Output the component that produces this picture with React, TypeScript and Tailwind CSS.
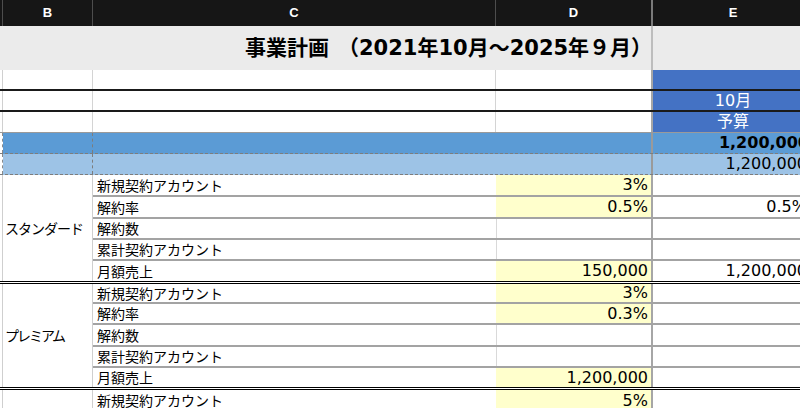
import React from "react";

type Row = {
  c: string;
  d?: string;
  y?: boolean;
  e?: string;
  h: string;
  last?: boolean;
};

const jp = "font-['Noto_Sans_CJK_JP',sans-serif]";
const num = "font-['DejaVu_Sans','Noto_Sans_CJK_JP',sans-serif]";

function DataRow({ r }: { r: Row }) {
  const line = r.last ? "" : "border-b-2 border-[#a3a3a3]";
  return (
    <div className={`flex ${r.h} ${line}`}>
      <div className={`w-[403px] flex items-center pl-1 text-[14px] text-black ${jp}`}>{r.c}</div>
      <div
        className={`w-[157px] flex items-center justify-end pr-[3px] border-r-2 border-r-[#a6a6a6] text-[16px] text-black ${num} ${
          r.y ? "bg-[#ffffcc]" : "border-l border-l-[#d9d9d9]"
        }`}
      >
        {r.d}
      </div>
      <div className={`w-[160px] flex items-center justify-end pr-[6px] text-[16px] text-black ${num}`}>{r.e}</div>
    </div>
  );
}

function Block({ label, rows, track, double }: { label: string; rows: Row[]; track: string; double: boolean }) {
  return (
    <div className={`flex ${double ? "border-b-[3px] border-double border-black" : ""}`}>
      <div className="w-[3px] border-r border-[#cfcfcf]" />
      <div className={`w-[90px] flex items-center pl-[2px] border-r border-[#cfcfcf] text-[14px] text-black ${jp} ${track}`}>
        {label}
      </div>
      <div className="flex flex-col">
        {rows.map((r, i) => (
          <DataRow key={i} r={r} />
        ))}
      </div>
    </div>
  );
}

export default function App() {
  const std: Row[] = [
    { c: "新規契約アカウント", d: "3%", y: true, h: "h-[22px]" },
    { c: "解約率", d: "0.5%", y: true, e: "0.5%", h: "h-[22px]" },
    { c: "解約数", h: "h-[21px]" },
    { c: "累計契約アカウント", h: "h-[21px]" },
    { c: "月額売上", d: "150,000", y: true, e: "1,200,000", h: "h-[20px]", last: true },
  ];
  const pre: Row[] = [
    { c: "新規契約アカウント", d: "3%", y: true, h: "h-[20px]" },
    { c: "解約率", d: "0.3%", y: true, h: "h-[21px]" },
    { c: "解約数", h: "h-[22px]" },
    { c: "累計契約アカウント", h: "h-[21px]" },
    { c: "月額売上", d: "1,200,000", y: true, h: "h-[19px]", last: true },
  ];
  const extra: Row[] = [{ c: "新規契約アカウント", d: "5%", y: true, h: "h-[21px]", last: true }];

  return (
    <div className="w-[800px] h-[408px] overflow-hidden bg-white">
      <div className="w-[813px]">
        {/* column header */}
        <div className="flex h-[26px] bg-[#161616] text-white text-[13px] font-bold font-['Liberation_Sans',sans-serif]">
          <div className="w-[3px] border-r border-[#4d4d4d]" />
          <div className="w-[90px] border-r border-[#4d4d4d] flex items-center justify-center">B</div>
          <div className="w-[403px] border-r border-[#4d4d4d] flex items-center justify-center">C</div>
          <div className="w-[157px] border-r-2 border-[#7a7a7a] flex items-center justify-center">D</div>
          <div className="w-[160px] flex items-center justify-center">E</div>
        </div>

        {/* title */}
        <div className="flex h-[44px] bg-[#ebebeb]">
          <div className="w-[653px] border-r-2 border-[#bdbdbd] flex items-center pl-[245px] pt-[1px] text-[21px] font-bold text-black font-['DejaVu_Sans','Noto_Sans_CJK_JP',sans-serif] whitespace-nowrap">
            <span>事業計画</span>
            <span className="ml-[9px]">（2021年10月～2025年９月）</span>
          </div>
          <div className="w-[160px]" />
        </div>

        {/* top blank rows */}
        <div className="flex h-[21px] border-b-2 border-[#1a1a1a]">
          <div className="w-[3px] border-r border-[#d0d0d0]" />
          <div className="w-[90px] border-r border-[#d4d4d4]" />
          <div className="w-[403px] border-r border-[#d4d4d4]" />
          <div className="w-[157px] border-r-2 border-[#a6a6a6]" />
          <div className="w-[160px] bg-[#4472c4]" />
        </div>
        <div className="flex h-[21px] border-b-2 border-[#1a1a1a]">
          <div className="w-[3px] border-r border-[#d0d0d0]" />
          <div className="w-[90px] border-r border-[#d4d4d4]" />
          <div className="w-[403px] border-r border-[#d4d4d4]" />
          <div className="w-[157px] border-r-2 border-[#a6a6a6]" />
          <div className={`w-[160px] bg-[#4472c4] flex items-center justify-center pt-[1px] text-white text-[16px] ${num}`}>10月</div>
        </div>
        <div className="flex h-[21px] border-b border-[#9a9a9a]">
          <div className="w-[3px] border-r border-[#d0d0d0]" />
          <div className="w-[90px] border-r border-[#d4d4d4]" />
          <div className="w-[403px] border-r border-[#d4d4d4]" />
          <div className="w-[157px] border-r-2 border-[#a6a6a6]" />
          <div className={`w-[160px] bg-[#4472c4] flex items-center justify-center text-white text-[16px] ${num}`}>予算</div>
        </div>

        {/* summary rows */}
        <div className="flex h-[21px] border-b border-dashed border-[#7d7d7d] bg-[#5b9bd5]">
          <div className="w-[3px] bg-white border-r border-dashed border-[#8a8a8a]" />
          <div className="w-[90px] border-r border-dashed border-[#7d7d7d]" />
          <div className="w-[560px] border-r-2 border-[#9a9a9a]" />
          <div className={`w-[160px] flex items-center justify-end pr-[4px] text-[16px] font-bold text-black ${num}`}>1,200,000</div>
        </div>
        <div className="flex h-[21px] border-b border-dashed border-[#7d7d7d] bg-[#9dc3e6]">
          <div className="w-[3px] bg-white border-r border-dashed border-[#8a8a8a]" />
          <div className="w-[90px] border-r border-dashed border-[#7d7d7d]" />
          <div className="w-[560px] border-r-2 border-[#9a9a9a]" />
          <div className={`w-[160px] flex items-center justify-end pr-[6px] text-[16px] text-black ${num}`}>1,200,000</div>
        </div>

        <Block label="スタンダード" rows={std} track="tracking-[-1px]" double />
        <Block label="プレミアム" rows={pre} track="tracking-[-2px]" double />
        <Block label="" rows={extra} track="" double={false} />
      </div>
    </div>
  );
}
